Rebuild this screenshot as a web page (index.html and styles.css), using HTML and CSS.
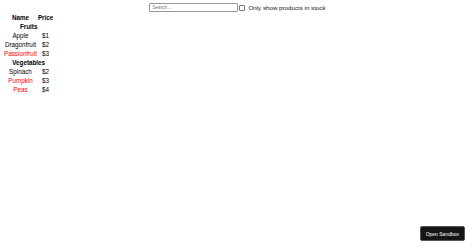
FILE: index.html
```html
<!DOCTYPE html>
<html>
<head>
<meta charset="utf-8">
<link rel="stylesheet" href="styles.css">
</head>
<body>
<div class="app">
  <form class="search">
    <input class="search-input" type="text" placeholder="Search...">
    <label class="stock"><input class="check" type="checkbox"> Only show products in stock</label>
  </form>
  <table class="products">
    <thead>
      <tr><th>Name</th><th>Price</th></tr>
    </thead>
    <tbody>
      <tr><th colspan="2">Fruits</th></tr>
      <tr><td>Apple</td><td>$1</td></tr>
      <tr><td>Dragonfruit</td><td>$2</td></tr>
      <tr><td class="out">Passionfruit</td><td>$3</td></tr>
      <tr><th colspan="2">Vegetables</th></tr>
      <tr><td>Spinach</td><td>$2</td></tr>
      <tr><td class="out">Pumpkin</td><td>$3</td></tr>
      <tr><td class="out">Peas</td><td>$4</td></tr>
    </tbody>
  </table>
</div>
<button class="sandbox-btn" type="button">Open Sandbox</button>
</body>
</html>
```
FILE: styles.css
```css
html, body {
  margin: 0;
  padding: 0;
  background: #fff;
}
body {
  font-family: "Liberation Sans", Arial, sans-serif;
  font-size: 6.3px;
  color: #000;
  height: 248px;
  position: relative;
}
.app {
  padding: 3px 3px 0 3px;
}
.search {
  display: flex;
  justify-content: center;
  align-items: center;
  gap: 1px;
  margin: 0;
  padding-left: 1px;
}
.search-input {
  width: 89px;
  height: 9px;
  box-sizing: border-box;
  font-size: 4.6px;
  padding: 0 2px;
  border: 1px solid #999;
  border-radius: 1px;
  font-family: "Liberation Sans", Arial, sans-serif;
  outline: none;
}
.search-input::placeholder {
  color: #777;
}
.stock {
  display: flex;
  align-items: center;
  gap: 3px;
  font-size: 6.2px;
  color: #111;
}
.check {
  -webkit-appearance: none;
  appearance: none;
  margin: 0;
  width: 6px;
  height: 6px;
  border: 1px solid #777;
  border-radius: 1px;
  background: #fff;
  box-sizing: border-box;
}
.products {
  border-spacing: 1px;
  margin-top: 1px;
  line-height: 8px;
}
.products th, .products td {
  padding: 0;
  text-align: center;
}
.products th {
  font-weight: bold;
}
.out {
  color: #f00;
}
.sandbox-btn {
  position: absolute;
  right: 9px;
  bottom: 7px;
  background: #151515;
  color: #fff;
  border: 1px solid #555;
  border-radius: 2px;
  font-family: "Liberation Sans", Arial, sans-serif;
  font-size: 5px;
  padding: 3.5px 5px;
  line-height: 6px;
}
```
